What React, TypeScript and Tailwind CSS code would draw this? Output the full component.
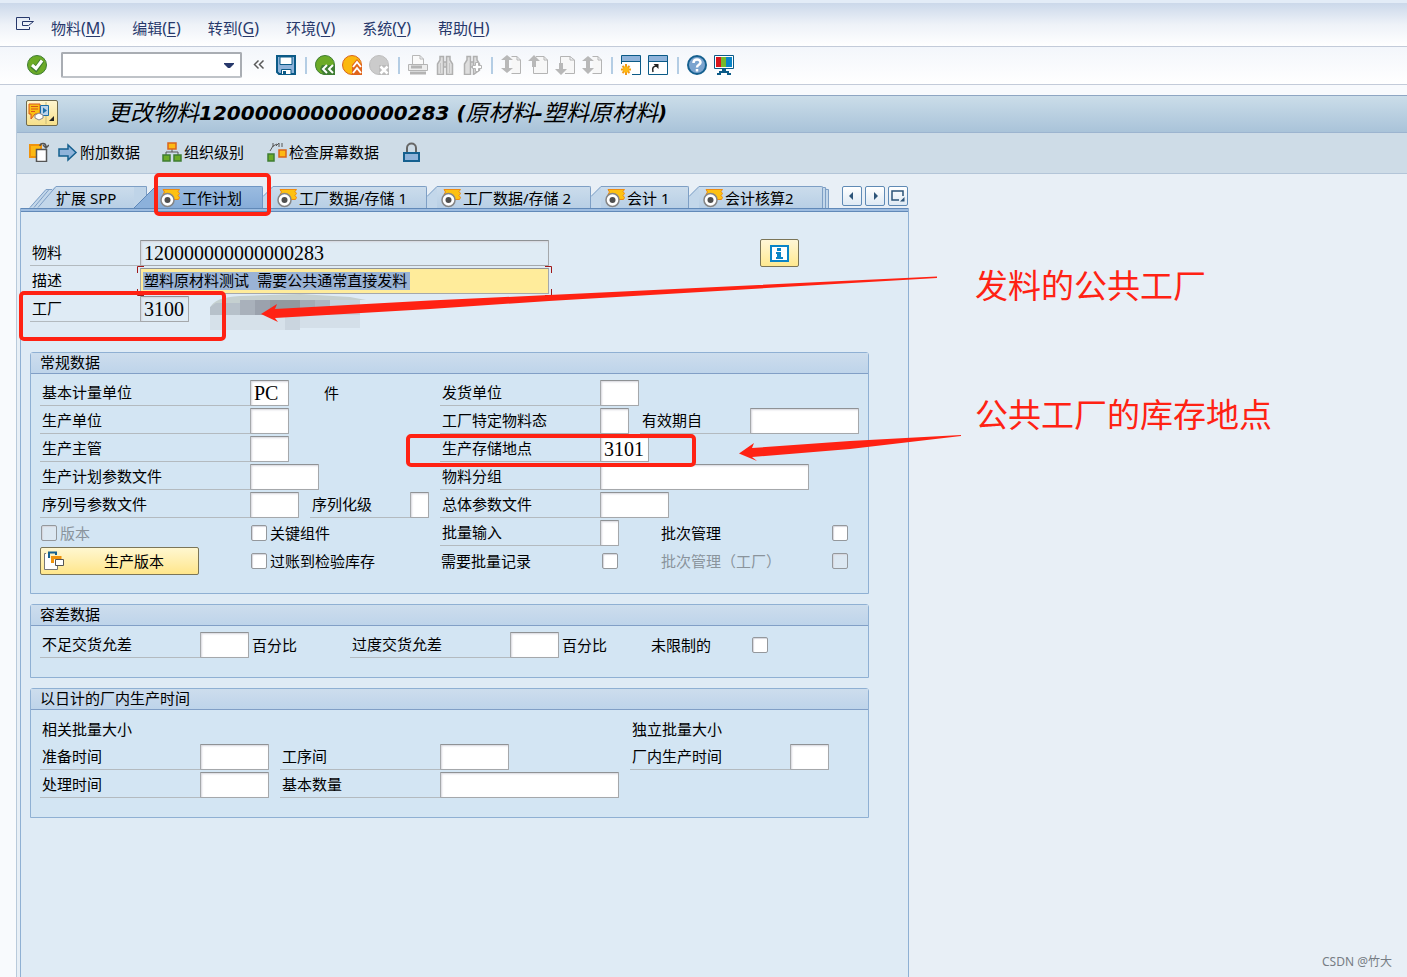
import { useId, type ReactNode } from "react";

const menus = [
  ["物料", "M"],
  ["编辑", "E"],
  ["转到", "G"],
  ["环境", "V"],
  ["系统", "Y"],
  ["帮助", "H"],
];

function Icon({ children, label }: { children: ReactNode; label: string }) {
  return (
    <svg width="20" height="20" viewBox="0 0 20 20" fill="none" role="img" aria-label={label} className="block shrink-0">
      {children}
    </svg>
  );
}

function ToolButton({ label, children }: { label: string; children: ReactNode }) {
  return (
    <button type="button" title={label} className="h-5 w-5 shrink-0">
      <Icon label={label}>{children}</Icon>
    </button>
  );
}

function Divider() {
  return (
    <span className="flex w-[5px] shrink-0 justify-center">
      <span className="h-[17px] w-[2px] bg-[#b4cde4]" />
    </span>
  );
}

function PageShape() {
  return (
    <path d="M10.5 1.5H16L19.5 5V18.5H10.5M16 1.5V5H19.5" stroke="#b4b4b4" fill="#f7f7f7" />
  );
}

function MenuBar() {
  return (
    <header className="flex h-[47px] items-center border-b border-[#c3cbd9] border-t-[3px] border-t-[#e3ecf7] bg-gradient-to-b from-[#cbd8ea] via-[#eef2f8] to-white pl-4 pt-[6px] text-[#27386b]">
      <button type="button" aria-label="菜单" className="mb-[7px] mr-[17px]">
        <svg width="18" height="14" viewBox="0 0 18 14" fill="none" stroke="#27386b" className="block">
          <path d="M13.5 3V.5H.5V12.5H13.5V10M6.500 4.500H17.500L12.500 8.500H6.500Z" />
        </svg>
      </button>
      <nav className="flex gap-[27px]">
        {menus.map(([name, key]) => (
          <button key={key} type="button" className="flex h-5 items-center leading-5">
            {name}
            <span className="text-base leading-5">
              (<u className="underline-offset-2">{key}</u>)
            </span>
          </button>
        ))}
      </nav>
    </header>
  );
}

function StandardToolbar() {
  return (
    <div className="flex h-[38px] items-center gap-[7px] border-b border-[#c3cbd9] bg-gradient-to-b from-[#f3f6fb] to-white pb-px pl-[27px]">
      <ToolButton label="回车">
        <circle cx="10" cy="10" r="9.500" fill="#6cab27" stroke="#3f7d33" />
        <path d="M5 10.500L9 14L15 5.500" stroke="#3f7d33" strokeWidth="5" />
        <path d="M5 10L9 13.500L15 5.500" stroke="#fff" strokeWidth="3" />
      </ToolButton>
      <div className="relative ml-[7px]">
        <input
          aria-label="命令"
          className="block h-[26px] w-[181px] rounded-[2px] border-2 border-[#a9adb3] border-b-[#bfc3c8] bg-white px-1 outline-none"
        />
        <svg width="12" height="7" viewBox="0 0 12 7" className="absolute right-[7px] top-[10px]">
          <path d="M1 1H11V2L7 6H5L1 2Z" fill="#27386b" />
        </svg>
      </div>
      <ToolButton label="收起">
        <path d="M9.500 5.500L5.500 9.500L9.500 13.500M14.500 5.500L10.500 9.500L14.500 13.500" stroke="#5a5a5a" strokeWidth="1.500" />
      </ToolButton>
      <ToolButton label="保存">
        <path d="M1 1H19V19H3L1 17Z" fill="#8fb3da" stroke="#0b5a87" strokeWidth="2" />
        <path d="M4 2H16V9.500H4Z" fill="#fff" stroke="#0b5a87" />
        <path d="M5.500 19V14.500H15V19" fill="#fff" stroke="#0b5a87" />
        <path d="M7 16H10V19H7Z" fill="#0b5a87" />
      </ToolButton>
      <Divider />
      <ToolButton label="返回">
        <path d="M10 .5A9.500 9.500 0 1 0 13 19H19.500V10A9.500 9.500 0 0 0 10 .5Z" fill="#6cab27" stroke="#3f7d33" />
        <path d="M7 10H20V20H9L5 14Z" fill="#3f7d33" />
        <path d="M12 10L8 14L12 18M18 10L14 14L18 18" stroke="#fff" strokeWidth="2" />
      </ToolButton>
      <ToolButton label="退出">
        <circle cx="10" cy="10" r="9.500" fill="#fbb80f" stroke="#d9641c" />
        <path d="M10 20V10L15 4L20 10V20Z" fill="#e0641c" />
        <path d="M11 12L15 7L19 12M11 18L15 13L19 18" stroke="#fff" strokeWidth="2" />
      </ToolButton>
      <ToolButton label="取消">
        <circle cx="10" cy="10" r="9.500" fill="#cbcbcb" stroke="#bdbdbd" />
        <path d="M10 10H20V20H10Z" fill="#bcbcbc" />
        <path d="M11.500 11.500L18.500 18.500M18.500 11.500L11.500 18.500" stroke="#fff" strokeWidth="2.500" />
      </ToolButton>
      <Divider />
      <ToolButton label="打印">
        <path d="M4.500 9V.5H12L15.500 4V9M12 .5V4H15.500" stroke="#b8b8b8" fill="#fafafa" />
        <path d="M.5 9.500H19.500V15.500H.5Z" fill="#ededed" stroke="#b4b4b4" />
        <path d="M3 12H14M2 18H18" stroke="#b4b4b4" strokeWidth="3" />
      </ToolButton>
      <ToolButton label="查找">
        <path d="M2.500 19.500V9L5 5V1.500H8.500V19.500ZM17.500 19.500V9L15 5V1.500H11.500V19.500ZM8.500 7H11.500V12H8.500Z" fill="#dedede" stroke="#b0b0b0" strokeWidth="1.500" />
        <path d="M5.500 8V18M14.500 8V18" stroke="#c4c4c4" />
      </ToolButton>
      <ToolButton label="查找下一个">
        <path d="M2.500 19.500V9L5 5V1.500H8.500V19.500ZM17.500 15V9L15 5V1.500H11.500V19.500ZM8.500 7H11.500V12H8.500Z" fill="#dedede" stroke="#b0b0b0" strokeWidth="1.500" />
        <path d="M13.500 7.500H16.500V10.500H19.500V13.500H16.500V16.500H13.500V13.500H10.500V10.500H13.500Z" fill="#fff" stroke="#b4b4b4" />
      </ToolButton>
      <Divider />
      <ToolButton label="首页">
        <PageShape />
        <path d="M6 0L12 5H8V8H4V5H0ZM6 18L0 13H4V8H8V13H12Z" fill="#b8b8b8" />
      </ToolButton>
      <ToolButton label="上一页">
        <path d="M5.500 10V18.500H19.500V5L16 1.500H8M16 1.500V5H19.500" stroke="#b4b4b4" fill="#f7f7f7" />
        <path d="M6 0L12 6H8V12H4V6H0Z" fill="#b8b8b8" />
      </ToolButton>
      <ToolButton label="下一页">
        <path d="M5.500 10V1.500H15L19.500 5V18.500H10M15 1.500V5H19.500" stroke="#b4b4b4" fill="#f7f7f7" />
        <path d="M6 20L0 14H4V8H8V14H12Z" fill="#b8b8b8" />
      </ToolButton>
      <ToolButton label="末页">
        <PageShape />
        <path d="M6 1L12 6H8V13H12L6 19L0 13H4V6H0Z" fill="#b8b8b8" />
      </ToolButton>
      <Divider />
      <ToolButton label="新建会话">
        <path d="M1 6H19.500V19.500H10V10H1Z" fill="#fff" />
        <path d="M1 1H19V6H1Z" fill="#8fb3da" />
        <path d="M.5 9V.5H19.500V19.500H11M1 6.500H19" stroke="#0b5a87" />
        <path d="M5 9V20M0 14.500H10M1.500 11L8.500 18M8.500 11L1.500 18" stroke="#f39a14" strokeWidth="2" />
        <circle cx="5" cy="14.500" r="3" fill="#fdb913" />
      </ToolButton>
      <ToolButton label="创建快捷方式">
        <path d="M1 1H19V19H1Z" fill="#fff" />
        <path d="M1 1H19V6H1Z" fill="#8fb3da" />
        <path d="M.5 .5H19.500V19.500H.5ZM1 6.500H19" stroke="#0b5a87" />
        <path d="M5 17C4 13 5 11 9 11" stroke="#222" strokeWidth="1.500" />
        <path d="M5.500 9H10.500V14Z" fill="#222" />
      </ToolButton>
      <Divider />
      <ToolButton label="帮助">
        <circle cx="10" cy="10" r="9" fill="#7ba4cf" stroke="#15608f" strokeWidth="2" />
        <path d="M6.500 8C6.500 3.500 13.500 3.500 13.500 7.500C13.500 10 10 9.500 10 12.500M10 14V16.500" stroke="#fff" strokeWidth="2.500" />
      </ToolButton>
      <ToolButton label="自定义布局">
        <path d="M.5 .5H19.500V13.500H.5Z" fill="#fff" stroke="#0b5a87" />
        <path d="M2 2H7V12H2Z" fill="#d8141c" />
        <path d="M7 2H12V12H7Z" fill="#76b82a" />
        <path d="M12 2H18V12H12Z" fill="#0a84c6" />
        <path d="M8 14H12V16H15V18H17V20H13V18H7V20H3V18H5V16H8Z" fill="#0b5a87" />
      </ToolButton>
    </div>
  );
}

function TitleBar() {
  return (
    <div className="flex h-[38px] items-center border-b border-t border-b-[#9cb4cf] border-t-[#8ea6c3] bg-gradient-to-b from-[#cbdde9] to-[#a9c3d9] pl-[9px]">
      <button
        type="button"
        aria-label="对象服务"
        className="mb-[3px] mr-[49px] h-[26px] w-8 shrink-0 rounded-[2px] border border-[#6f6a4d] bg-gradient-to-b from-[#fff6cf] to-[#f7e08a]"
      >
        <svg width="30" height="24" viewBox="0 0 30 24" fill="none" className="block">
          <path d="M2 3H13V13H8L4 18V13H2Z" fill="#fbc015" stroke="#d9541c" />
          <path d="M4 5.500H11M4 8H11M4 10.500H8" stroke="#d9541c" />
          <path d="M19 1V23" stroke="#c9bb7b" />
          <path d="M13.500 4.500H21.500V14.500H13.500Z" fill="#b9d3ea" stroke="#1d6fa8" />
          <path d="M16 6.500L20 9.500L16 12.500Z" fill="#1d6fa8" />
          <path d="M8 14L12 12L16 14V17L12 19L8 17Z" fill="#fff" stroke="#888" />
          <path d="M27 15V20H22Z" fill="#222" />
        </svg>
      </button>
      <h1 className="mb-[3px] flex items-center whitespace-pre font-['DejaVu_Sans','Noto_Sans_CJK_SC',sans-serif] text-[23px] italic leading-8 text-black">
        更改物料<b className="text-xl leading-8">120000000000000283 (</b>原材料<b className="text-xl leading-8">-</b>
        塑料原材料<b className="text-xl leading-8">)</b>
      </h1>
    </div>
  );
}

function AppToolbar() {
  return (
    <div className="flex h-[41px] items-center border-b border-[#b3c5d8] bg-[#cedce7] pb-[2px] pl-3">
      <button type="button" aria-label="其他物料" className="mr-[9px]">
        <Icon label="其他物料">
          <path d="M1 3H12V15H1Z" fill="#fdb913" stroke="#f0930c" strokeWidth="2" />
          <path d="M7.500 7.500H17.500V19.500H7.500Z" fill="#fff" stroke="#555" strokeWidth="1.500" />
          <path d="M11 4C11 1 17 0 17 5M14 3L17 6L20 3" stroke="#555" strokeWidth="1.500" />
        </Icon>
      </button>
      <button type="button" className="mr-[22px] flex items-center gap-[2px] leading-5">
        <Icon label="附加数据">
          <path d="M1 7H10V3L18 10.500L10 18V14H1Z" fill="#8fb3da" stroke="#15608f" strokeWidth="1.500" />
        </Icon>
        附加数据
      </button>
      <button type="button" className="mr-[23px] flex items-center gap-[2px] leading-5">
        <Icon label="组织级别">
          <path d="M10 7V10M4 13V10H16V13" stroke="#555" />
          <path d="M6 1H14V7H6Z" fill="#fdb913" stroke="#d9641c" strokeWidth="1.500" />
          <path d="M1 13H8V19H1ZM12 13H19V19H12Z" fill="#6cab27" stroke="#3f7d33" strokeWidth="1.500" />
        </Icon>
        组织级别
      </button>
      <button type="button" className="mr-[22px] flex items-center gap-[2px] leading-5">
        <Icon label="检查屏幕数据">
          <path d="M3 9L6 4L10 2M6 1V5M12 1V5M15 1V5M9 4L12 1" stroke="#555" />
          <path d="M1 12H7V19H1Z" fill="#6cab27" stroke="#3f7d33" strokeWidth="1.500" />
          <path d="M12 8H19V15H12Z" fill="#fdb913" stroke="#d9641c" strokeWidth="1.500" />
        </Icon>
        检查屏幕数据
      </button>
      <button type="button" aria-label="锁定">
        <Icon label="锁定">
          <path d="M6 10V6C6 0 15 0 15 6V10" stroke="#666" strokeWidth="2" />
          <path d="M3 11H18V19H3Z" fill="#8fb3da" stroke="#15608f" strokeWidth="2" />
        </Icon>
      </button>
    </div>
  );
}

function TabIcon() {
  return (
    <Icon label="视图已维护">
      <path d="M3 1.500H19.500L18 3.500L19.500 5.500L18 7.500L19.500 9.500L18.500 11.500H5V6.500H3L4.500 4Z" fill="#fdc112" stroke="#ee8a10" />
      <circle cx="7.500" cy="12" r="6.500" fill="#fff" stroke="#858585" strokeWidth="1.500" />
      <circle cx="7.500" cy="12" r="3" fill="#4f4f4f" />
    </Icon>
  );
}

function TabEdge() {
  return (
    <svg width="10" height="22" viewBox="0 0 10 22" className="block shrink-0">
      <path d="M0 22V10L10 0V22Z" fill="#c3d7ea" />
      <path d="M0 10.500L10 .5" stroke="#7e9fc5" />
    </svg>
  );
}

function Tab({ label, width }: { label: string; width: string }) {
  return (
    <button type="button" role="tab" aria-selected="false" className="flex h-[22px] shrink-0">
      <TabEdge />
      <span
        className={`flex h-[22px] items-center gap-[2px] rounded-tr-[2px] border-r border-t border-[#7e9fc5] bg-gradient-to-b from-[#cbdcec] to-[#b8cfe5] pl-1 leading-5 ${width}`}
      >
        <TabIcon />
        {label}
      </span>
    </button>
  );
}

function NavButton({ label, children }: { label: string; children: ReactNode }) {
  return (
    <button
      type="button"
      aria-label={label}
      className="h-5 w-5 shrink-0 rounded-[2px] border border-[#5f8ab5] bg-gradient-to-b from-white to-[#dfeaf4]"
    >
      <svg width="18" height="18" viewBox="0 0 18 18" fill="none" className="block">
        {children}
      </svg>
    </button>
  );
}

function TabStrip() {
  return (
    <div role="tablist" className="flex h-[22px] pl-[9px]">
      <button type="button" role="tab" aria-selected="false" className="flex h-[22px] shrink-0">
        <svg width="27" height="22" viewBox="0 0 27 22" className="block">
          <path d="M0 22L17 3H23L27 0V22Z" fill="#c3d7ea" />
          <path d="M1 21.500L17 3.500H23M5 21.500L20 3.500M9 21.500L27 .5" stroke="#7e9fc5" fill="none" />
        </svg>
        <span className="flex h-[22px] w-[78px] items-center border-t border-[#7e9fc5] bg-gradient-to-b from-[#cbdcec] to-[#b8cfe5] leading-5">
          扩展 SPP
        </span>
      </button>
      <button type="button" role="tab" aria-selected="true" className="flex h-[22px] shrink-0">
        <svg width="22" height="22" viewBox="0 0 22 22" className="block">
          <path d="M0 0H12V10L0 22Z" fill="#bfd4e8" />
          <path d="M0 .5H12.500V10" stroke="#7e9fc5" fill="none" />
          <path d="M0 22L22 0V22Z" fill="#8cb1db" />
          <path d="M0 22L22 0" stroke="#5f88b8" />
        </svg>
        <span className="flex h-[22px] w-[107px] items-center gap-[2px] rounded-tr-[2px] border-r border-t border-[#6f96c4] bg-gradient-to-b from-[#9abbe0] to-[#86acd8] pl-1 leading-5">
          <TabIcon />
          工作计划
        </span>
      </button>
      <Tab label="工厂数据/存储 1" width="w-[154px]" />
      <Tab label="工厂数据/存储 2" width="w-[154px]" />
      <Tab label="会计 1" width="w-[88px]" />
      <Tab label="会计核算2" width="w-[124px]" />
      <svg width="7" height="22" viewBox="0 0 7 22" className="block shrink-0">
        <path d="M0 2H3L6 4V22H0Z" fill="#c3d7ea" />
        <path d="M0 1.500H2.500V22M3 3.500H5.500V22" stroke="#7e9fc5" fill="none" />
      </svg>
      <div className="ml-3 flex gap-[3px]">
        <NavButton label="向左">
          <path d="M10 5V13L6 9Z" fill="#2d5478" />
        </NavButton>
        <NavButton label="向右">
          <path d="M8 5V13L12 9Z" fill="#2d5478" />
        </NavButton>
        <NavButton label="视图列表">
          <path d="M10 13H3V4H14V9" stroke="#2d5478" strokeWidth="1.500" />
          <path d="M11 14.500H15.500V10Z" fill="#2d5478" />
        </NavButton>
      </div>
    </div>
  );
}

// One label on the character grid, underlined up to the field that follows it.
function Field({
  label,
  labelWidth,
  width,
  value,
  readOnly,
}: {
  label: string;
  labelWidth: string;
  width: string;
  value?: string;
  readOnly?: boolean;
}) {
  const id = useId();
  return (
    <div className="flex h-[26px] shrink-0">
      <label htmlFor={id} className={`h-[26px] shrink-0 border-b border-[#b3babf] pl-[2px] leading-6 ${labelWidth}`}>
        {label}
      </label>
      <input
        id={id}
        defaultValue={value}
        readOnly={readOnly}
        className={`h-[26px] shrink-0 rounded-[1px] border border-[#a5a8ab] border-t-[#8f9295] px-[3px] font-['Liberation_Serif','Noto_Serif',serif] text-xl leading-6 text-black shadow-[inset_1px_1px_2px_#d5d5dc] outline-none ${
          readOnly ? "bg-[#dfebf4]" : "bg-white"
        } ${width}`}
      />
    </div>
  );
}

const boxClass =
  "h-4 w-4 shrink-0 appearance-none rounded-[2px] border border-[#94989c] bg-white shadow-[inset_1px_1px_1px_#d5d5dc] disabled:bg-[#dce8f2]";

// Tick box in front of its text
function Check({ label, disabled }: { label: string; disabled?: boolean }) {
  return (
    <label className={`flex items-center gap-[3px] pl-px leading-[26px] ${disabled ? "text-[#8a949c]" : ""}`}>
      <input type="checkbox" disabled={disabled} className={boxClass} />
      {label}
    </label>
  );
}

// Text first, tick box at the end of a fixed width
function TrailingCheck({ label, width, disabled }: { label: string; width: string; disabled?: boolean }) {
  return (
    <label
      className={`flex shrink-0 items-center justify-between pl-px leading-[26px] ${width} ${
        disabled ? "text-[#8a949c]" : ""
      }`}
    >
      {label}
      <input type="checkbox" disabled={disabled} className={boxClass} />
    </label>
  );
}

function Row({ children }: { children: ReactNode }) {
  return <div className="flex h-7 items-center">{children}</div>;
}

function Group({ title, children }: { title: string; children: ReactNode }) {
  return (
    <section className="rounded-t-[3px] border border-[#8fb0d3] bg-[#d3e5f3]">
      <h2 className="h-[21px] border-b border-[#819fc6] bg-gradient-to-b from-[#cddded] to-[#bed4ea] pl-[9px] leading-[18px]">
        {title}
      </h2>
      <div className="flex flex-col px-[9px] pb-[18px] pt-[5px]">{children}</div>
    </section>
  );
}

function MaterialHeader() {
  return (
    <div className="flex flex-col">
      <Row>
        <Field label="物料" labelWidth="w-[110px]" width="w-[409px]" value="120000000000000283" readOnly />
        <button
          type="button"
          aria-label="信息"
          className="ml-[211px] flex h-7 w-[39px] items-center justify-center rounded-[2px] border border-[#7b7557] bg-gradient-to-b from-[#fff7d6] to-[#ffe98f]"
        >
          <svg width="19" height="17" viewBox="0 0 19 17" className="block">
            <path d="M1 1H18V16H1Z" fill="#fff" stroke="#0a84c6" strokeWidth="2" />
            <path d="M7 3H11V6H7ZM6 7H11V12H13V14H6V12H7V9H6Z" fill="#0a84c6" />
          </svg>
        </button>
      </Row>
      <Row>
        <label htmlFor="description" className="h-[26px] w-[110px] border-b border-[#b3babf] pl-[2px] leading-6">
          描述
        </label>
        <div className="relative h-[26px] w-[409px] border border-[#a5a8ab] border-t-[#8f9295] bg-[#ffec9b]">
          <span className="absolute left-[2px] top-[3px] h-[18px] w-[267px] bg-[#9ab3d5]" />
          <input
            id="description"
            defaultValue="塑料原材料测试  需要公共通常直接发料"
            className="relative block h-6 w-full bg-transparent px-[3px] font-['Liberation_Sans','Noto_Sans_CJK_SC',sans-serif] leading-6 outline-none"
          />
          <svg width="415" height="30" viewBox="0 0 415 30" fill="none" stroke="#a01818" className="pointer-events-none absolute -left-1 -top-[3px]">
            <path d="M.5 7V.5H7M408 .5H414.500V7M.5 23V29.500H7M408 29.500H414.500V23" />
          </svg>
        </div>
      </Row>
      <Row>
        <Field label="工厂" labelWidth="w-[110px]" width="w-[49px]" value="3100" readOnly />
      </Row>
    </div>
  );
}

function GeneralData() {
  return (
    <Group title="常规数据">
      <div className="flex">
        <div className="flex w-[400px] shrink-0 flex-col">
          <Row>
            <Field label="基本计量单位" labelWidth="w-[210px]" width="w-[39px]" value="PC" />
            <span className="ml-[35px]">件</span>
          </Row>
          <Row>
            <Field label="生产单位" labelWidth="w-[210px]" width="w-[39px]" />
          </Row>
          <Row>
            <Field label="生产主管" labelWidth="w-[210px]" width="w-[39px]" />
          </Row>
          <Row>
            <Field label="生产计划参数文件" labelWidth="w-[210px]" width="w-[69px]" />
          </Row>
          <Row>
            <Field label="序列号参数文件" labelWidth="w-[210px]" width="w-[49px]" />
            <span className="w-[11px]" />
            <Field label="序列化级" labelWidth="w-[100px]" width="w-[19px]" />
          </Row>
          <Row>
            <div className="w-[210px]">
              <Check label="版本" disabled />
            </div>
            <Check label="关键组件" />
          </Row>
          <Row>
            <div className="w-[210px]">
              <button
                type="button"
                className="flex h-7 w-[159px] items-center rounded-[2px] border border-[#7b7557] bg-gradient-to-b from-[#fff7d0] to-[#ffe68a] pl-[3px] leading-6"
              >
                <Icon label="生产版本">
                  <path d="M2 2.500H.5V18.500H13.500V15" fill="#fff" stroke="#777" />
                  <path d="M2 3V17H12V9H6V3Z" fill="#fff" />
                  <path d="M5 7V1.500H12V4" stroke="#15608f" strokeWidth="2" />
                  <path d="M8.500 12V6.500H16V9" stroke="#f0930c" strokeWidth="3" />
                  <path d="M11.500 8.500H19.500V14.500H11.500Z" fill="#fff" stroke="#555" />
                </Icon>
                <span className="ml-10">生产版本</span>
              </button>
            </div>
            <Check label="过账到检验库存" />
          </Row>
        </div>
        <div className="flex flex-1 flex-col">
          <Row>
            <Field label="发货单位" labelWidth="w-[160px]" width="w-[39px]" />
          </Row>
          <Row>
            <Field label="工厂特定物料态" labelWidth="w-[160px]" width="w-[29px]" />
            <span className="w-[11px]" />
            <Field label="有效期自" labelWidth="w-[110px]" width="w-[109px]" />
          </Row>
          <Row>
            <Field label="生产存储地点" labelWidth="w-[160px]" width="w-[49px]" value="3101" />
          </Row>
          <Row>
            <Field label="物料分组" labelWidth="w-[160px]" width="w-[209px]" />
          </Row>
          <Row>
            <Field label="总体参数文件" labelWidth="w-[160px]" width="w-[69px]" />
          </Row>
          <Row>
            <Field label="批量输入" labelWidth="w-[160px]" width="w-[19px]" />
            <span className="w-[41px]" />
            <TrailingCheck label="批次管理" width="w-[188px]" />
          </Row>
          <Row>
            <TrailingCheck label="需要批量记录" width="w-[178px]" />
            <span className="w-[42px]" />
            <TrailingCheck label="批次管理（工厂）" width="w-[188px]" disabled />
          </Row>
        </div>
      </div>
    </Group>
  );
}

function ToleranceData() {
  return (
    <Group title="容差数据">
      <Row>
        <Field label="不足交货允差" labelWidth="w-[160px]" width="w-[49px]" />
        <span className="w-[101px] pl-[3px]">百分比</span>
        <Field label="过度交货允差" labelWidth="w-[160px]" width="w-[49px]" />
        <span className="w-[91px] pl-[3px]">百分比</span>
        <TrailingCheck label="未限制的" width="w-[118px]" />
      </Row>
    </Group>
  );
}

function ProductionTime() {
  return (
    <Group title="以日计的厂内生产时间">
      <Row>
        <span className="w-[590px] pl-[2px]">相关批量大小</span>
        <span className="pl-[2px]">独立批量大小</span>
      </Row>
      <Row>
        <Field label="准备时间" labelWidth="w-[160px]" width="w-[69px]" />
        <span className="w-[11px]" />
        <Field label="工序间" labelWidth="w-[160px]" width="w-[69px]" />
        <span className="w-[121px]" />
        <Field label="厂内生产时间" labelWidth="w-[160px]" width="w-[39px]" />
      </Row>
      <Row>
        <Field label="处理时间" labelWidth="w-[160px]" width="w-[69px]" />
        <span className="w-[11px]" />
        <Field label="基本数量" labelWidth="w-[160px]" width="w-[179px]" />
      </Row>
    </Group>
  );
}

// Hand-drawn marks that lie over the form
function Annotations() {
  return (
    <div className="pointer-events-none absolute left-0 top-0 text-[33px] leading-10 text-[#ff2213]">
      <svg width="1000" height="480" viewBox="0 0 1000 480" fill="none" className="block">
        <path d="M210 308Q214 297 240 296L300 294L350 297L366 300L330 300V315H210Z" fill="#c5d0d0" />
        <path d="M210 315V307L216 303H240V315Z" fill="#b7c1ca" />
        <path d="M240 300H255V315H240Z" fill="#a9b1bb" />
        <path d="M255 300H270V315H255Z" fill="#9ba2ad" />
        <path d="M270 300H300V315H270Z" fill="#92999f" />
        <path d="M300 300H315V315H300Z" fill="#a3abb5" />
        <path d="M315 300H330V315H315Z" fill="#adb6c1" />
        <path d="M330 300H360V315H330Z" fill="#c6d2dd" />
        <path d="M210 315H285V330H210Z" fill="#d6e1ea" />
        <path d="M285 315H300V330H285Z" fill="#cad5df" />
        <path d="M300 315H360V328H300Z" fill="#d4dfe9" />
        <g stroke="#ff2213" strokeWidth="4">
          <rect x="156" y="175" width="113" height="39" rx="3" />
          <rect x="21" y="293" width="203" height="46" rx="3" />
          <rect x="408" y="436" width="286" height="29" rx="3" />
        </g>
        <path d="M261 314L277 304L275 309L430 300.500L549 295L937 276.500V278L549 301L430 309L275 318L278 322Z" fill="#ff2213" />
        <path d="M739 453.500L754 443L752 448L850 441L961 435V436L850 449L752 457L757 461Z" fill="#ff2213" />
      </svg>
      <p className="absolute left-[975px] top-[266px] whitespace-nowrap">发料的公共工厂</p>
      <p className="absolute left-[975px] top-[395px] whitespace-nowrap">公共工厂的库存地点</p>
    </div>
  );
}

export default function App() {
  return (
    <div className="relative flex min-h-screen flex-col overflow-hidden bg-[#f8fafd] font-['Noto_Sans','Noto_Sans_CJK_SC',sans-serif] text-[15px] leading-5 text-black">
      <MenuBar />
      <StandardToolbar />
      <div className="flex flex-1 flex-col pl-4 pt-[10px]">
        <main className="flex flex-1 flex-col border-l border-[#b9cadb] bg-[#e8eff6]">
          <TitleBar />
          <AppToolbar />
          <div className="flex flex-1 flex-col pl-[3px] pt-3">
            <TabStrip />
            <div className="flex w-full max-w-[889px] flex-1 flex-col border-x border-[#8fb0d3] bg-[#dfebf5]">
              <div className="h-1 border-y border-[#6189b8] bg-[#9dbce0]" />
              <div className="flex flex-col pl-[9px] pr-[39px] pt-[27px]">
                <MaterialHeader />
                <div className="mt-[29px] flex flex-col gap-[10px]">
                  <GeneralData />
                  <ToleranceData />
                  <ProductionTime />
                </div>
              </div>
            </div>
          </div>
        </main>
      </div>
      <Annotations />
      <p className="absolute bottom-[5px] right-[15px] text-xs leading-5 text-[#777d84]">CSDN @竹大</p>
    </div>
  );
}
